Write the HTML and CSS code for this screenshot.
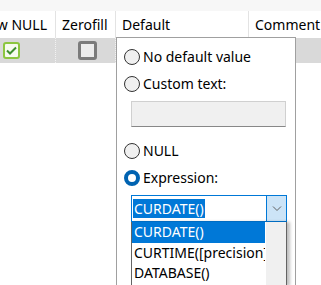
FILE: index.html
```html
<!DOCTYPE html>
<html>
<head>
<meta charset="utf-8">
<link rel="stylesheet" href="styles.css">
</head>
<body>
<div class="grid">
  <div class="topstrip"></div>
  <div class="header">
    <div class="hcell c1"><span>Allow NULL</span></div>
    <div class="hcell c2"><span>Zerofill</span></div>
    <div class="hcell c3"><span>Default</span></div>
    <div class="hcell c4"><span>Comment</span></div>
  </div>
  <div class="row">
    <div class="rcell c1 center">
      <span class="chk-green">
        <svg width="11" height="9" viewBox="0 0 11 9"><path d="M1 4.5 L4 7.5 L10 1.5" fill="none" stroke="#3f8f2f" stroke-width="2"/></svg>
      </span>
    </div>
    <div class="rcell c2 center"><span class="chk-gray"></span></div>
    <div class="rcell c3"></div>
    <div class="rcell c4"></div>
  </div>
</div>

<div class="popup">
  <label class="opt"><span class="radio"></span><span>No default value</span></label>
  <label class="opt"><span class="radio"></span><span>Custom text:</span></label>
  <div class="field"></div>
  <label class="opt opt-null"><span class="radio"></span><span>NULL</span></label>
  <label class="opt"><span class="radio on"></span><span>Expression:</span></label>
  <div class="combo">
    <div class="combo-text"><span class="sel">CURDATE()</span></div>
    <div class="combo-btn">
      <svg width="10" height="6" viewBox="0 0 10 6"><path d="M1 0.5 L5 4.5 L9 0.5" fill="none" stroke="#606060" stroke-width="1"/></svg>
    </div>
    <div class="list">
      <div class="items">
        <div class="item hl">CURDATE()</div>
        <div class="item">CURTIME([precision])</div>
        <div class="item">DATABASE()</div>
      </div>
      <div class="scroll"></div>
    </div>
  </div>
</div>
</body>
</html>
```
FILE: styles.css
```css
html, body {
  margin: 0;
  padding: 0;
}
body {
  width: 321px;
  height: 285px;
  overflow: hidden;
  background: #fff;
  font-family: "Segoe UI", "Noto Sans", "Open Sans", sans-serif;
  font-size: 14px;
  color: #000;
  position: relative;
}
.topstrip {
  height: 11px;
  background: #f7f7f7;
}
.header {
  display: flex;
  height: 27px;
  background: #fff;
}
.hcell {
  display: flex;
  align-items: center;
  overflow: hidden;
  white-space: nowrap;
  border-right: 1px solid #e3e3e3;
  box-sizing: border-box;
  padding: 0 6px;
}
.c1 { width: 56px; flex: none; }
.c2 { width: 60px; flex: none; }
.c3 { width: 133px; flex: none; }
.c4 { flex: 1; border-right: none; }
.header .c1 {
  justify-content: flex-end;
  padding-right: 8px;
}
.row {
  display: flex;
  height: 25px;
  background: #d9d9d9;
}
.rcell {
  box-sizing: border-box;
  border-right: 1px dotted #f2f2f2;
  display: flex;
  align-items: center;
}
.rcell.c4 { border-right: none; }
.center { justify-content: center; }
.row .c1 { justify-content: flex-start; padding-left: 3px; }
.chk-green {
  width: 13px;
  height: 13px;
  border: 2px solid #8cc63f;
  border-radius: 3px;
  background: #f6fbef;
  display: flex;
  align-items: center;
  justify-content: center;
}
.chk-gray {
  width: 13px;
  height: 13px;
  border: 3px solid #7b7b7b;
  border-radius: 3px;
  background: #ececec;
  margin-left: 3px;
}

.popup {
  position: absolute;
  left: 116px;
  top: 37px;
  width: 180px;
  height: 248px;
  border: 1px solid #a0a0a0;
  border-bottom: none;
  background: #fff;
  box-sizing: border-box;
  padding: 5px 0 0 7px;
  display: flex;
  flex-direction: column;
}
.opt {
  display: flex;
  align-items: center;
  gap: 3px;
  height: 27px;
  white-space: nowrap;
}
.radio {
  width: 14px;
  height: 14px;
  border: 1px solid #333;
  border-radius: 50%;
  background: #f0f0f0;
  flex: none;
}
.radio.on {
  width: 8px;
  height: 8px;
  border: 4px solid #0063b1;
  background: #fff;
}
.field {
  margin: 4px 0 0 7px;
  width: 155px;
  height: 26px;
  box-sizing: border-box;
  background: #f0f0f0;
  border: 1px solid #d0d0d0;
  border-bottom-color: #888;
}
.opt-null { margin-top: 10px; }
.combo {
  position: relative;
  margin: 4px 0 0 7px;
  width: 156px;
  height: 27px;
  box-sizing: border-box;
  border: 1px solid #0078d7;
  display: flex;
}
.combo-text {
  flex: 1;
  display: flex;
  align-items: center;
  padding-left: 1px;
}
.sel {
  background: #0078d7;
  color: #fff;
  line-height: 19px;
  padding: 0 1px;
}
.combo-btn {
  width: 19px;
  background: #cce4f7;
  border-left: 1px solid #0078d7;
  display: flex;
  align-items: center;
  justify-content: center;
}
.list {
  position: absolute;
  left: -1px;
  top: 26px;
  width: 156px;
  height: 64px;
  box-sizing: border-box;
  border: 1px solid #646464;
  border-top: none;
  border-bottom: none;
  background: #fff;
  display: flex;
  box-shadow: 3px 0 3px rgba(0,0,0,0.25);
}
.items {
  width: 133px;
  overflow: hidden;
}
.item {
  height: 20.5px;
  line-height: 20px;
  padding-left: 2px;
  white-space: nowrap;
}
.item.hl {
  background: #0078d7;
  color: #fff;
}
.scroll {
  flex: 1;
  background: #f0f0f0;
  border-left: 1px solid #fff;
}
```
